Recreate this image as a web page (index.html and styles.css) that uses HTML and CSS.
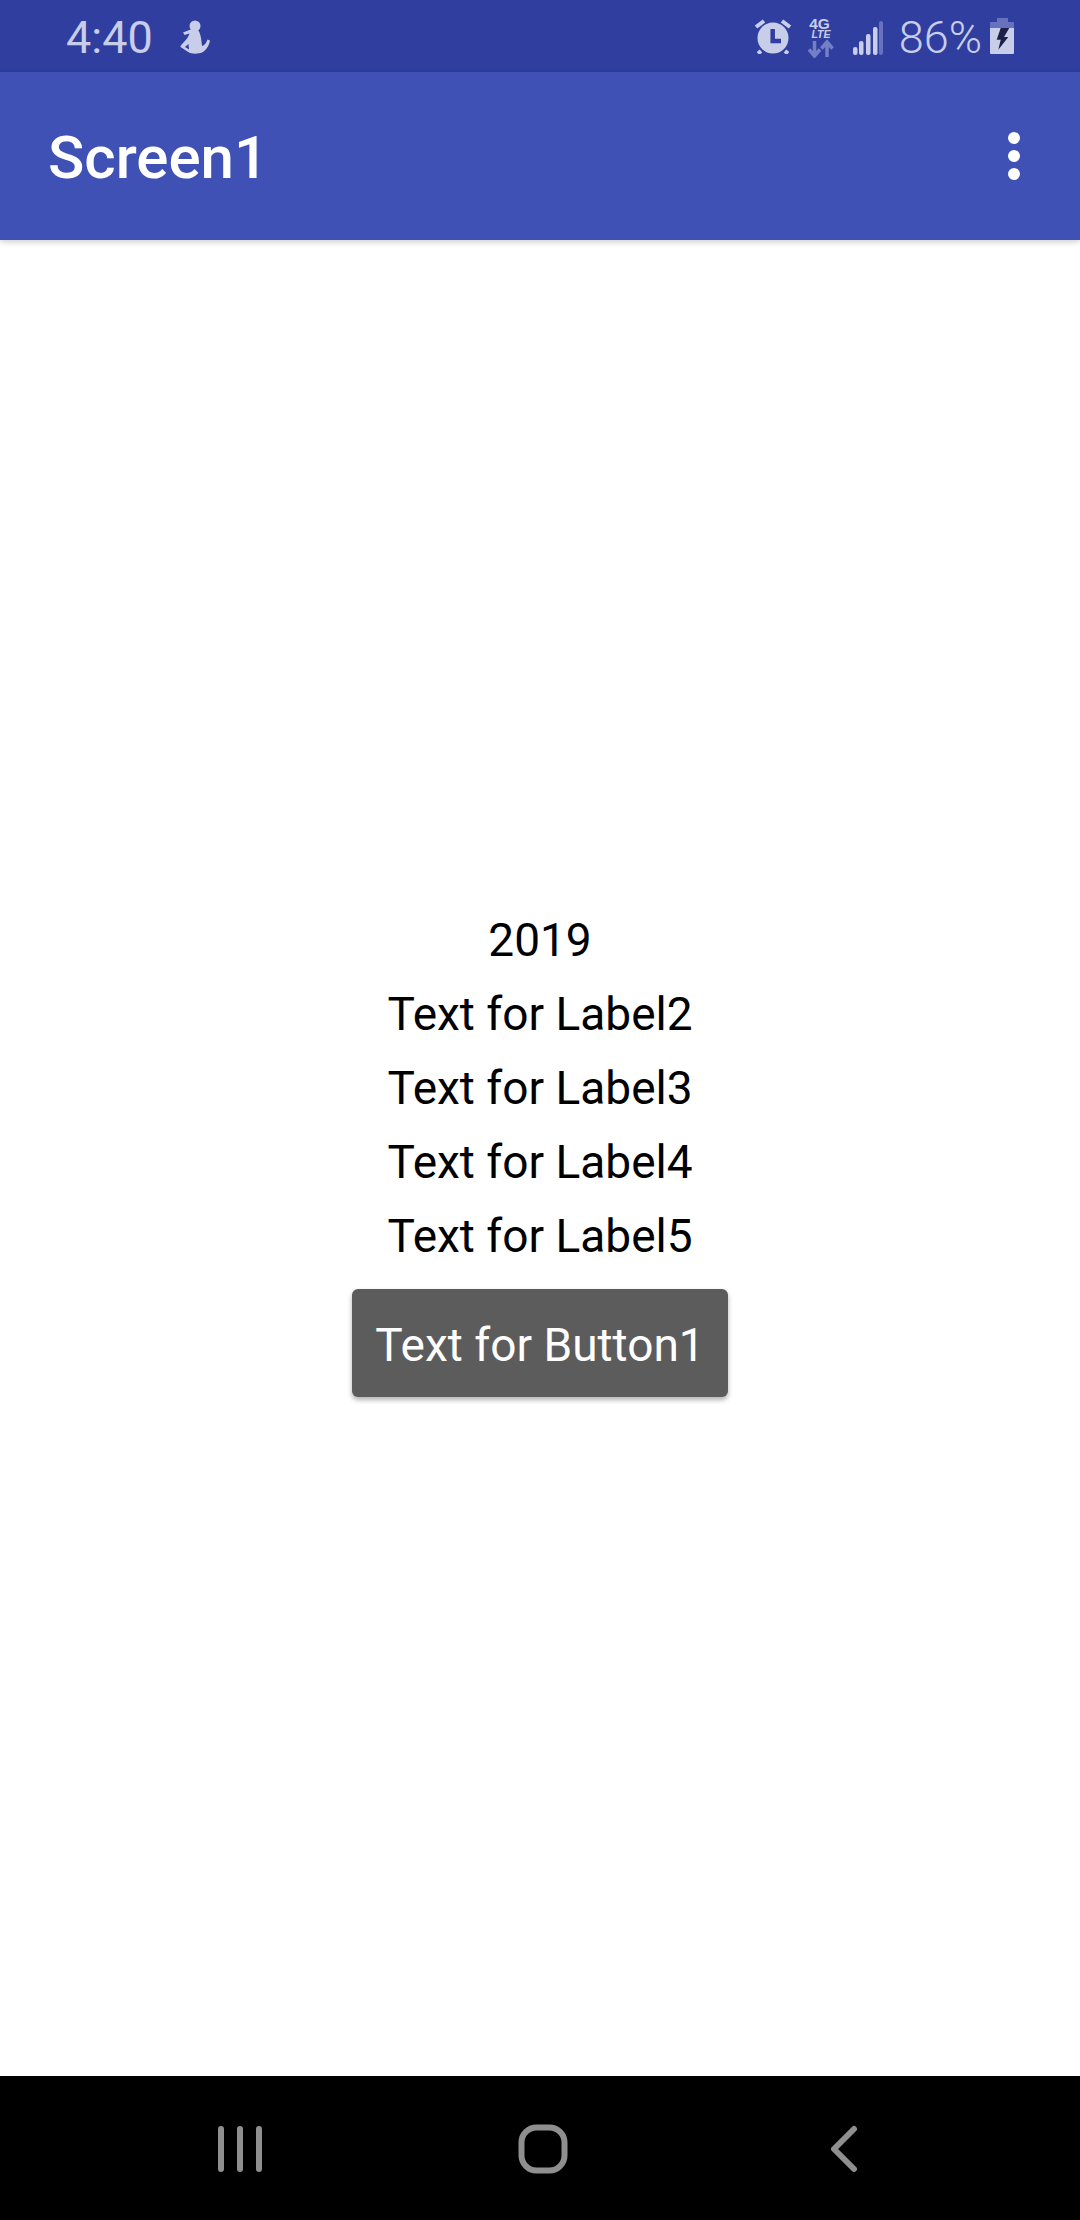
FILE: index.html
```html
<!DOCTYPE html>
<html lang="en">

<head>
  <meta charset="utf-8" />
  <title>Screen1</title>
  <link rel="stylesheet" href="styles.css">
</head>

<body>
  <div class="screen">
    <div class="status-bar">
      <div class="status-left">
        <span class="time">4:40</span>
        <svg class="icon-runner" width="30" height="34" viewBox="0 0 30 34">
          <circle cx="15" cy="6" r="5.5" fill="currentColor" />
          <path fill="currentColor" fill-rule="evenodd" d="M13 8.5 L3 12.5 L4.5 15 L9.5 13.5 C8.5 17 6 20 3.5 22.5 C1.5 24.5 0 26 0.5 27 L9 32.5 C11 34 19 34 22 32.5 C26 30.5 29 26 30 20.5 L27.5 19.5 C26.5 22.5 24.5 25.5 22 26 C21.5 21 21 16 19.5 12.5 C18.5 10 16 8.5 13 8.5 Z M8.5 24 L5 27 L9 29.5 Z" />
        </svg>
      </div>
      <div class="status-right">
        <svg class="icon-alarm" width="40" height="36" viewBox="0 0 40 36">
          <circle cx="19" cy="20" r="15.5" fill="currentColor" />
          <path d="M2 9 L10 3 M36 9 L28 3 M7 33 L4 35.5 M31 33 L34 35.5" stroke="currentColor" stroke-width="4" fill="none" />
          <path d="M18.7 11 V23 H27" stroke="#303f9f" stroke-width="4.5" fill="none" />
        </svg>
        <svg class="icon-network" width="28" height="44" viewBox="0 -5 28 44">
          <text class="net-4g" x="11.5" y="10">4G</text>
          <text class="net-lte" x="13" y="19">LTE</text>
          <path class="net-arrow" d="M6.5 22 V37 M1 30.5 L6.5 37 L12 30.5 M19 38 V23 M13.5 29.5 L19 23 L24.5 29.5" />
        </svg>
        <svg class="icon-signal" width="32" height="34" viewBox="0 0 32 34">
          <rect x="1" y="26" width="4.5" height="8" rx="2" fill="currentColor" />
          <rect x="7" y="20" width="4.5" height="14" rx="2" fill="currentColor" />
          <rect x="14" y="13" width="4.5" height="21" rx="2" fill="currentColor" />
          <rect x="21" y="6" width="4.5" height="28" rx="2" fill="currentColor" />
          <rect x="27" y="0" width="4" height="34" rx="2" fill="#6672bd" />
        </svg>
        <span class="battery-level">86%</span>
        <svg class="icon-battery" width="24" height="36" viewBox="0 0 24 36">
          <path fill="#6672bd" d="M7 0 H18 V4 H23 Q24 4 24 5 V10 H0 V5 Q0 4 1 4 H7 Z" />
          <path fill="currentColor" d="M0 10 H24 V35 Q24 36 23 36 H1 Q0 36 0 35 Z" />
          <path fill="#1d2147" d="M10.7 10 H19.3 L14 19 H18.3 L8.3 31.7 L10.7 21.7 H6.7 Z" />
        </svg>
      </div>
    </div>

    <div class="app-bar">
      <span class="app-title">Screen1</span>
      <svg class="icon-menu" width="12" height="48" viewBox="0 0 12 48">
        <circle cx="6" cy="6" r="6" />
        <circle cx="6" cy="24" r="6" />
        <circle cx="6" cy="42" r="6" />
      </svg>
    </div>

    <div class="content">
      <div class="label">2019</div>
      <div class="label">Text for Label2</div>
      <div class="label">Text for Label3</div>
      <div class="label">Text for Label4</div>
      <div class="label">Text for Label5</div>
      <button class="button">Text for Button1</button>
    </div>

    <div class="nav-bar">
      <svg class="nav-recent" width="44" height="46" viewBox="0 0 44 46">
        <path d="M3 3 V43 M22 3 V43 M41 3 V43" />
      </svg>
      <svg class="nav-home" width="50" height="50" viewBox="0 0 50 50">
        <rect x="3.5" y="3.5" width="43" height="43" rx="15" />
      </svg>
      <svg class="nav-back" width="28" height="48" viewBox="0 0 28 48">
        <path d="M24 4 L4 24 L24 44" />
      </svg>
    </div>
  </div>
</body>

</html>
```

FILE: styles.css
```css
body {
  margin: 0;
  background-color: #fff;
  font-family: Roboto, sans-serif;
}

.screen {
  display: flex;
  flex-direction: column;
  width: 1080px;
  height: 2220px;
  overflow: hidden;
}

.status-bar {
  display: flex;
  justify-content: space-between;
  align-items: center;
  flex: none;
  height: 72px;
  padding: 0 66px 0 66px;
  box-sizing: border-box;
  background-color: #303f9f;
  color: #c8cdea;
}

.status-left,
.status-right {
  display: flex;
  align-items: center;
}

.time {
  padding-top: 3px;
  font-size: 45px;
  line-height: 69px;
}

.icon-runner {
  margin-left: 27px;
  margin-top: 2px;
}

.icon-network {
  margin-left: 14px;
}

.net-4g,
.net-lte {
  fill: currentColor;
  font-family: "Liberation Sans", sans-serif;
  font-weight: 700;
  text-anchor: middle;
}

.net-4g {
  font-size: 15.5px;
}

.net-lte {
  font-size: 10.5px;
  font-style: italic;
}

.net-arrow {
  fill: none;
  stroke: #7480c6;
  stroke-width: 3.5;
}

.icon-signal {
  margin-left: 16px;
  margin-top: 4px;
}

.battery-level {
  margin-left: 15px;
  padding-top: 3px;
  font-size: 45px;
  font-weight: 300;
  line-height: 69px;
}

.icon-battery {
  margin-left: 8px;
}

.app-bar {
  display: flex;
  justify-content: space-between;
  align-items: center;
  flex: none;
  height: 168px;
  padding: 0 60px 0 48px;
  box-sizing: border-box;
  background-color: #3f51b5;
  box-shadow: 0 2px 6px rgba(0, 0, 0, 0.2);
  position: relative;
}

.app-title {
  margin-top: 2px;
  color: #fff;
  font-size: 60px;
  font-weight: 500;
}

.icon-menu {
  fill: #fff;
}

.content {
  display: flex;
  flex-direction: column;
  justify-content: center;
  align-items: center;
  flex: 1;
  padding-bottom: 16px;
}

.label {
  color: #000;
  font-size: 46px;
  line-height: 74px;
}

.button {
  width: 376px;
  height: 108px;
  margin-top: 16px;
  padding: 3px 0 0;
  border: 0;
  border-radius: 6px;
  background-color: #5c5c5d;
  box-shadow: 0 3px 5px rgba(0, 0, 0, 0.3);
  color: #fff;
  font-family: inherit;
  font-size: 46px;
}

.nav-bar {
  display: flex;
  align-items: center;
  flex: none;
  height: 144px;
  padding: 2px 0 0 218px;
  box-sizing: border-box;
  background-color: #000;
}

.nav-bar path,
.nav-bar rect {
  fill: none;
  stroke: #8f8f8f;
  stroke-width: 6;
  stroke-linecap: round;
  stroke-linejoin: round;
}

.nav-home {
  margin-left: 256px;
}

.nav-back {
  margin-left: 262px;
}
```
